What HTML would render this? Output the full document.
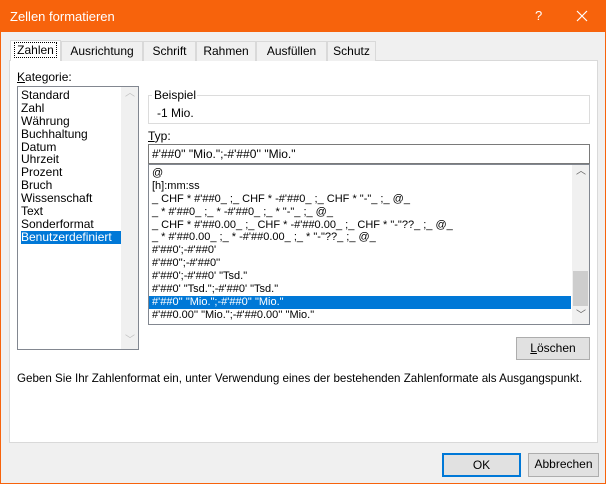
<!DOCTYPE html>
<html><head><style>
*{margin:0;padding:0;box-sizing:border-box}
body{width:606px;height:484px;background:#f0f0f0;font-family:"Liberation Sans",sans-serif;font-size:12px;color:#000;position:relative;overflow:hidden;border:1px solid #f7630c}
.a{position:absolute}
.title{left:0;top:0;width:606px;height:31px;background:#f7630c;color:#fff;font-size:13px}
.tab{top:40px;height:20px;border:1px solid #d9d9d9;border-bottom:none;background:#f0f0f0;text-align:center;line-height:19px}
.panel{left:8px;top:59px;width:589px;height:383px;background:#fff;border:1px solid #d9d9d9}
.list div{height:12.9px;line-height:13px;white-space:nowrap}
.btn{background:#e1e1e1;border:1px solid #adadad;text-align:center;line-height:21px}
.tl{font-size:11px;padding-left:3px}
</style></head><body>
<div class="a title"><span class="a" style="left:9px;top:8px">Zellen formatieren</span><span class="a" style="left:534px;top:7px">?</span>
<svg class="a" style="left:575px;top:9px" width="12" height="12"><path d="M1 1L11 11M11 1L1 11" stroke="#fff" stroke-width="1.2"/></svg></div>
<div class="a panel"></div>
<div class="a tab" style="left:9px;top:39px;width:51px;height:21px;background:#fff;border-color:#d9d9d9"><span style="border:1px dotted #000;padding:0 2px">Zahlen</span></div>
<div class="a tab" style="left:60px;width:82px">Ausrichtung</div>
<div class="a tab" style="left:142px;width:53px">Schrift</div>
<div class="a tab" style="left:195px;width:60px">Rahmen</div>
<div class="a tab" style="left:255px;width:71px">Ausfüllen</div>
<div class="a tab" style="left:326px;width:49px">Schutz</div>
<div class="a" style="left:16px;top:69px"><u>K</u>ategorie:</div>
<div class="a list" style="left:16px;top:85px;width:122px;height:264px;border:1px solid #828790;padding:2px 0 0 3px">
<div>Standard</div><div>Zahl</div><div>Währung</div><div>Buchhaltung</div><div>Datum</div><div>Uhrzeit</div><div>Prozent</div><div>Bruch</div><div>Wissenschaft</div><div>Text</div><div>Sonderformat</div><div style="background:#0078d7;color:#fff;width:100px">Benutzerdefiniert</div>
<div class="a" style="right:0;top:0;width:17px;height:262px;background:#f0f0f0"><span class="a" style="left:4px;top:0;color:#c0c0c0;font-size:10px">︿</span><span class="a" style="left:4px;bottom:2px;color:#c0c0c0;font-size:10px">﹀</span></div></div>
<div class="a" style="left:147px;top:94px;width:442px;height:29px;border:1px solid #dcdcdc;border-top:none"></div>
<div class="a" style="left:147px;top:94px;width:4px;border-top:1px solid #dcdcdc"></div>
<div class="a" style="left:196px;top:94px;width:393px;border-top:1px solid #dcdcdc"></div>
<div class="a" style="left:153px;top:87px">Beispiel</div>
<div class="a" style="left:156px;top:105px">-1 Mio.</div>
<div class="a" style="left:147px;top:128px"><u>T</u>yp:</div>
<div class="a" style="left:147px;top:143px;width:442px;height:20px;border:1px solid #7a7a7a;padding:2px 3px;font-size:12px">#'##0'' "Mio.";-#'##0'' "Mio."</div>
<div class="a list tl" style="left:147px;top:163px;width:442px;height:161px;border:1px solid #828790;padding-top:2px;font-size:11px">
<div>@</div><div>[h]:mm:ss</div><div>_ CHF * #'##0_ ;_ CHF * -#'##0_ ;_ CHF * "-"_ ;_ @_</div><div>_ * #'##0_ ;_ * -#'##0_ ;_ * "-"_ ;_ @_</div><div>_ CHF * #'##0.00_ ;_ CHF * -#'##0.00_ ;_ CHF * "-"??_ ;_ @_</div><div>_ * #'##0.00_ ;_ * -#'##0.00_ ;_ * "-"??_ ;_ @_</div><div>#'##0';-#'##0'</div><div>#'##0'';-#'##0''</div><div>#'##0';-#'##0' "Tsd."</div><div>#'##0' "Tsd.";-#'##0' "Tsd."</div><div style="background:#0078d7;color:#fff;width:422px;margin-left:-3px;padding-left:3px">#'##0'' "Mio.";-#'##0'' "Mio."</div><div>#'##0.00'' "Mio.";-#'##0.00'' "Mio."</div>
<div class="a" style="right:0;top:0;width:17px;height:159px;background:#f0f0f0"><span class="a" style="left:4px;top:0;color:#606060;font-size:10px">︿</span><div class="a" style="left:1px;top:106px;width:15px;height:35px;background:#cdcdcd"></div><span class="a" style="left:4px;bottom:2px;color:#606060;font-size:10px">﹀</span></div></div>
<div class="a btn" style="left:515px;top:336px;width:74px;height:23px"><u>L</u>öschen</div>
<div class="a" style="left:16px;top:371px;font-size:11.6px">Geben Sie Ihr Zahlenformat ein, unter Verwendung eines der bestehenden Zahlenformate als Ausgangspunkt.</div>
<div class="a btn" style="left:441px;top:452px;width:79px;height:24px;border:2px solid #0078d7;line-height:20px">OK</div>
<div class="a btn" style="left:527px;top:452px;width:71px;height:24px">Abbrechen</div>
</body></html>
